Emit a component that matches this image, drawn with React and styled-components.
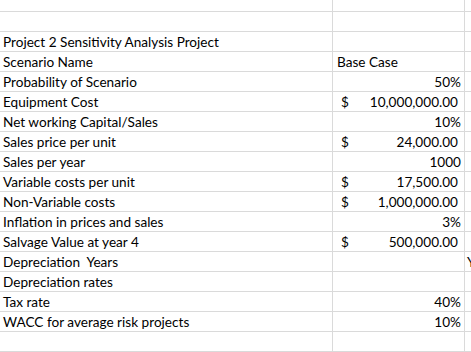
import React from 'react';
import styled, { createGlobalStyle } from 'styled-components';

const GlobalStyle = createGlobalStyle`
  html, body {
    margin: 0;
    padding: 0;
    background: #ffffff;
    overflow: hidden;
  }
  body {
    font-family: Lato, "Liberation Sans", sans-serif;
    color: #000000;
  }
`;

const rows = [
  { label: '' },
  { label: 'Project 2 Sensitivity Analysis Project' },
  { label: 'Scenario Name', value: 'Base Case', kind: 'text' },
  { label: 'Probability of Scenario', value: '50%', kind: 'num' },
  { label: 'Equipment Cost', value: '10,000,000.00', kind: 'money' },
  { label: 'Net working Capital/Sales', value: '10%', kind: 'num' },
  { label: 'Sales price per unit', value: '24,000.00', kind: 'money' },
  { label: 'Sales per year', value: '1000', kind: 'num' },
  { label: 'Variable costs per unit', value: '17,500.00', kind: 'money' },
  { label: 'Non-Variable costs', value: '1,000,000.00', kind: 'money' },
  { label: 'Inflation in prices and sales', value: '3%', kind: 'num' },
  { label: 'Salvage Value at year 4', value: '500,000.00', kind: 'money' },
  { label: 'Depreciation\u00a0 Years', overflow: 'Y' },
  { label: 'Depreciation rates' },
  { label: 'Tax rate', value: '40%', kind: 'num' },
  { label: 'WACC for average risk projects', value: '10%', kind: 'num' },
  { label: '' },
];

export default function App() {
  return (
    <>
      <GlobalStyle />
      <Sheet>
        <Row $height={12}>
          <LabelCell />
          <ValueCell />
          <ExtraCell />
        </Row>
        {rows.map((row, i) => (
          <Row key={i} $height={20}>
            <LabelCell>{row.label}</LabelCell>
            <ValueCell $align={row.kind === 'num' ? 'right' : 'left'}>
              {row.kind === 'money' ? (
                <>
                  <Currency>$</Currency>
                  <Amount>{row.value}</Amount>
                </>
              ) : (
                row.value
              )}
            </ValueCell>
            <ExtraCell>{row.overflow}</ExtraCell>
          </Row>
        ))}
      </Sheet>
    </>
  );
}

const Sheet = styled.div`
  display: flex;
  flex-direction: column;
  width: 471px;
  height: 352px;
  overflow: hidden;
  font-size: 13.6px;
`;

const Row = styled.div`
  display: grid;
  grid-template-columns: 333px 132px 1fr;
  height: ${props => props.$height}px;
  flex-shrink: 0;
`;

const Cell = styled.div`
  box-sizing: border-box;
  border-bottom: 1px solid #dadada;
  line-height: 19px;
  padding-top: 1px;
  white-space: nowrap;
  overflow: hidden;
`;

const LabelCell = styled(Cell)`
  border-right: 1px solid #dadada;
  padding-left: 3px;
`;

const ValueCell = styled(Cell)`
  display: flex;
  justify-content: ${props => props.$align === 'right' ? 'flex-end' : 'flex-start'};
  border-right: 1px solid #dadada;
  padding: 1px 3px 0 4px;
`;

const ExtraCell = styled(Cell)`
  padding-left: 2px;
`;

const Currency = styled.span`
  padding-left: 4px;
`;

const Amount = styled.span`
  margin-left: auto;
  padding-right: 3px;
`;
